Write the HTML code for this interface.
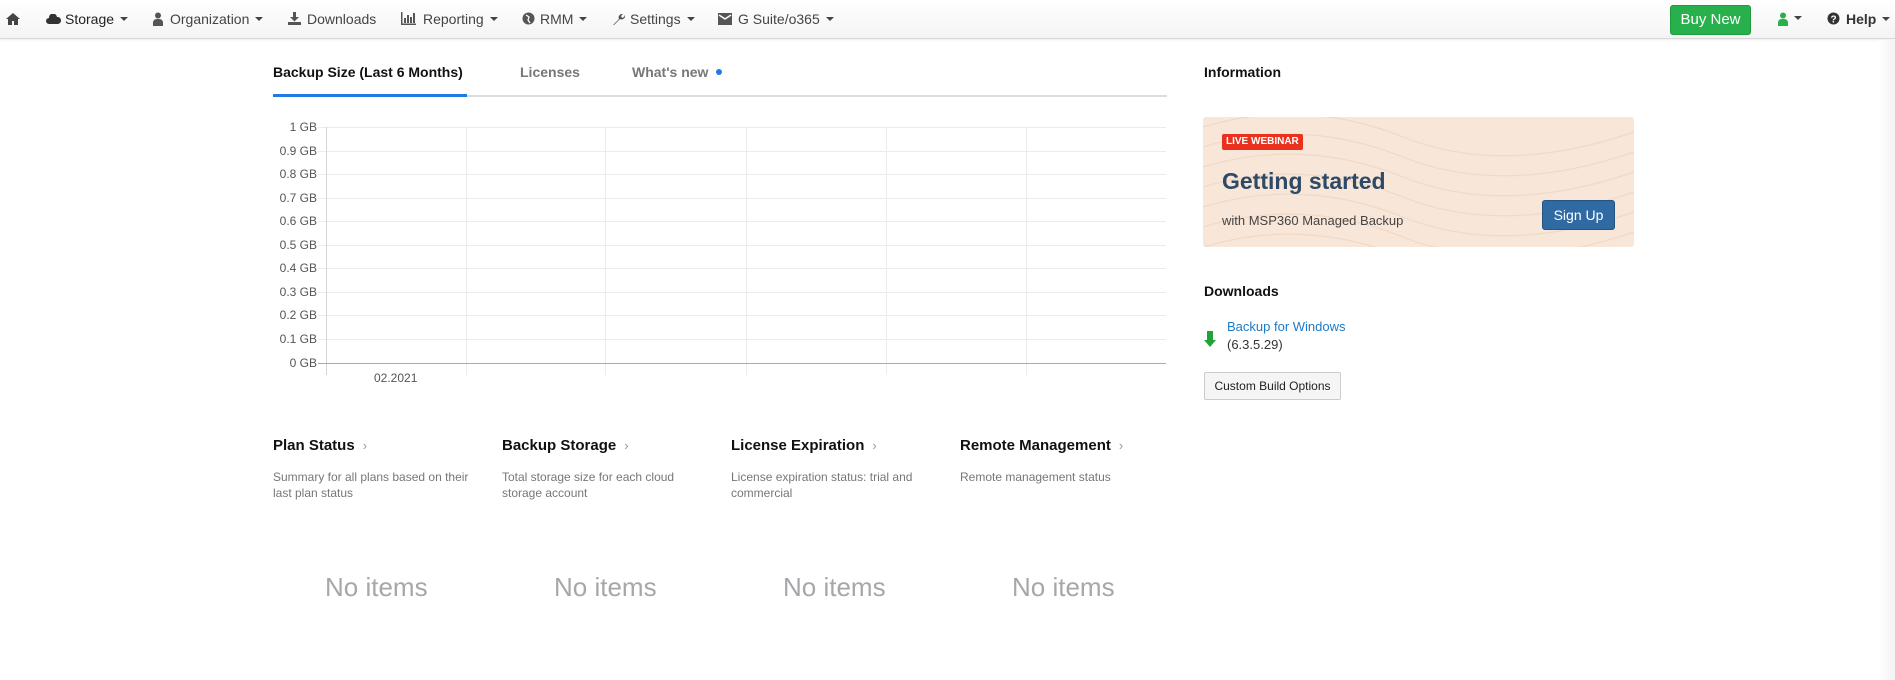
<!DOCTYPE html>
<html><head><meta charset="utf-8"><style>
*{margin:0;padding:0;box-sizing:border-box}
body{width:1895px;height:680px;background:#fff;font-family:"Liberation Sans",sans-serif;position:relative;overflow:hidden;color:#111}
.a{position:absolute;white-space:nowrap}
.nav{position:absolute;left:0;top:0;width:1895px;height:39px;background:linear-gradient(#fff,#f4f4f4);border-bottom:1px solid #d8d8d8;box-shadow:0 1px 3px rgba(0,0,0,.08)}
.ni{position:absolute;top:11px;font-size:14px;color:#444}
.car{display:inline-block;width:0;height:0;border-left:4px solid transparent;border-right:4px solid transparent;border-top:4px solid #444;vertical-align:middle;margin-left:6px;margin-top:-3px}
.tab{position:absolute;top:64px;font-size:14px;font-weight:bold}
.yl{position:absolute;right:1578px;font-size:12px;color:#555;text-align:right}
.h{position:absolute;top:437px;font-size:15px;font-weight:bold}
.h span{color:#999;font-weight:normal;margin-left:8px;font-size:13px}
.d{position:absolute;top:469px;font-size:12px;color:#777;line-height:16px;width:215px;white-space:normal}
.ne{position:absolute;top:572px;font-size:26px;color:#a5a7aa}
</style></head><body>
<div class="nav"></div>
<svg class="a" style="left:5px;top:12px" width="16" height="14" viewBox="0 0 16 14"><path d="M8 1L1 7h2v6h4V9h2v4h4V7h2z" fill="#444"/></svg>
<svg class="a" style="left:46px;top:14px" width="15" height="10" viewBox="0 0 15 10"><path d="M3 10a3 3 0 010-6 4 4 0 018-1 3.5 3.5 0 011 7z" fill="#333"/></svg>
<div class="ni" style="left:65px;color:#222">Storage<span class="car"></span></div>
<svg class="a" style="left:153px;top:12px" width="10" height="14" viewBox="0 0 10 14"><circle cx="5" cy="3.5" r="3" fill="#555"/><path d="M0 14v-4a4 4 0 014-3h2a4 4 0 014 3v4z" fill="#555"/></svg>
<div class="ni" style="left:170px">Organization<span class="car"></span></div>
<svg class="a" style="left:288px;top:12px" width="13" height="13" viewBox="0 0 13 13"><path d="M5 0h3v5h3l-4.5 4.5L2 5h3zM0 10h13v3H0z" fill="#555"/></svg>
<div class="ni" style="left:307px">Downloads</div>
<svg class="a" style="left:401px;top:12px" width="15" height="13" viewBox="0 0 15 13"><path d="M0 0h1.5v11.5H15V13H0zM3 6h2v5H3zM6 3h2v8H6zM9 5h2v6H9zM12 1h2v10h-2z" fill="#555"/></svg>
<div class="ni" style="left:423px">Reporting<span class="car"></span></div>
<svg class="a" style="left:522px;top:12px" width="13" height="13" viewBox="0 0 13 13"><circle cx="6.5" cy="6.5" r="6" fill="#555"/><path d="M4 3l3 2-1 3 2 3" stroke="#fff" stroke-width="1.3" fill="none"/></svg>
<div class="ni" style="left:540px">RMM<span class="car"></span></div>
<svg class="a" style="left:612px;top:12px" width="14" height="14" viewBox="0 0 14 14"><path d="M1 13l6-6a3.5 3.5 0 014-5l-2 2 1 2 2-1 1-2a3.5 3.5 0 01-5 4l-6 6z" fill="#555"/></svg>
<div class="ni" style="left:630px">Settings<span class="car"></span></div>
<svg class="a" style="left:718px;top:13px" width="14" height="12" viewBox="0 0 14 12"><path d="M0 0h14v12H0z" fill="#555"/><path d="M1 2l6 4 6-4" stroke="#fff" stroke-width="1.5" fill="none"/></svg>
<div class="ni" style="left:738px">G Suite/o365<span class="car"></span></div>
<div class="a" style="left:1670px;top:5px;width:81px;height:30px;background:#27b04b;border:1px solid #1f9a3e;border-radius:3px;color:#fff;font-size:15px;text-align:center;line-height:28px">Buy New</div>
<svg class="a" style="left:1778px;top:12px" width="10" height="14" viewBox="0 0 10 14"><circle cx="5" cy="3.5" r="3" fill="#27b04b"/><path d="M0 14v-4a4 4 0 014-3h2a4 4 0 014 3v4z" fill="#27b04b"/></svg>
<span class="car a" style="left:1788px;top:19px"></span>
<svg class="a" style="left:1827px;top:12px" width="13" height="13" viewBox="0 0 13 13"><circle cx="6.5" cy="6.5" r="6" fill="#333"/><text x="6.5" y="10.5" font-size="10" font-weight="bold" fill="#fff" text-anchor="middle" font-family="Liberation Sans">?</text></svg>
<div class="ni" style="left:1846px;font-weight:bold;color:#333">Help<span class="car"></span></div>
<div class="a" style="left:1878px;top:40px;width:17px;height:640px;background:linear-gradient(90deg,#fff,#f3f3f3)"></div>

<div class="tab" style="left:273px">Backup Size (Last 6 Months)</div>
<div class="tab" style="left:520px;color:#777">Licenses</div>
<div class="tab" style="left:632px;color:#777">What's new <span style="display:inline-block;width:6px;height:6px;border-radius:50%;background:#1e7be6;vertical-align:middle;margin-left:4px;margin-top:-3px"></span></div>
<div class="a" style="left:273px;top:95px;width:894px;height:2px;background:#ddd"></div>
<div class="a" style="left:273px;top:94px;width:194px;height:3px;background:#1e7be6"></div>

<svg class="a" style="left:0;top:0" width="1200" height="400">
<g stroke="#ebebeb" stroke-width="1">
<line x1="318" x2="1166" y1="127.5" y2="127.5"/><line x1="318" x2="1166" y1="151.5" y2="151.5"/><line x1="318" x2="1166" y1="174.5" y2="174.5"/><line x1="318" x2="1166" y1="198.5" y2="198.5"/><line x1="318" x2="1166" y1="221.5" y2="221.5"/><line x1="318" x2="1166" y1="245.5" y2="245.5"/><line x1="318" x2="1166" y1="268.5" y2="268.5"/><line x1="318" x2="1166" y1="292.5" y2="292.5"/><line x1="318" x2="1166" y1="315.5" y2="315.5"/><line x1="318" x2="1166" y1="339.5" y2="339.5"/>
<line x1="466.5" x2="466.5" y1="127" y2="375"/><line x1="605.5" x2="605.5" y1="127" y2="375"/><line x1="746.5" x2="746.5" y1="127" y2="375"/><line x1="886.5" x2="886.5" y1="127" y2="375"/><line x1="1026.5" x2="1026.5" y1="127" y2="375"/>
</g>
<line x1="326.5" x2="326.5" y1="127" y2="375" stroke="#d5d5d5"/>
<line x1="318" x2="1166" y1="363.5" y2="363.5" stroke="#aaa"/>
</svg>
<div class="yl" style="top:120px">1 GB</div><div class="yl" style="top:144px">0.9 GB</div><div class="yl" style="top:167px">0.8 GB</div><div class="yl" style="top:191px">0.7 GB</div><div class="yl" style="top:214px">0.6 GB</div><div class="yl" style="top:238px">0.5 GB</div><div class="yl" style="top:261px">0.4 GB</div><div class="yl" style="top:285px">0.3 GB</div><div class="yl" style="top:308px">0.2 GB</div><div class="yl" style="top:332px">0.1 GB</div><div class="yl" style="top:356px">0 GB</div>
<div class="a" style="left:374px;top:371px;font-size:12px;color:#555">02.2021</div>

<div class="h" style="left:273px">Plan Status<span>›</span></div>
<div class="h" style="left:502px">Backup Storage<span>›</span></div>
<div class="h" style="left:731px">License Expiration<span>›</span></div>
<div class="h" style="left:960px">Remote Management<span>›</span></div>
<div class="d" style="left:273px">Summary for all plans based on their last plan status</div>
<div class="d" style="left:502px;width:200px">Total storage size for each cloud storage account</div>
<div class="d" style="left:731px;width:200px">License expiration status: trial and commercial</div>
<div class="d" style="left:960px">Remote management status</div>
<div class="ne" style="left:325px">No items</div>
<div class="ne" style="left:554px">No items</div>
<div class="ne" style="left:783px">No items</div>
<div class="ne" style="left:1012px">No items</div>

<div class="a" style="left:1204px;top:64px;font-size:14px;font-weight:bold">Information</div>
<div class="a" style="left:1203px;top:117px;width:431px;height:130px;background:#f8e6d8;border-radius:3px;overflow:hidden">
<svg width="431" height="130" style="position:absolute;left:0;top:0"><g stroke="#f0d9c6" fill="none" stroke-width="1.2">
<path d="M0 10q100-30 200 10t231-5"/><path d="M0 30q100-30 200 10t231-5"/><path d="M0 50q100-30 200 10t231-5"/><path d="M0 70q100-30 200 10t231-5"/><path d="M0 90q100-30 200 10t231-5"/><path d="M0 110q100-30 200 10t231-5"/><path d="M0 130q100-30 200 10t231-5"/></g></svg>
</div>
<div class="a" style="left:1222px;top:134px;height:16px;padding:0 4px;background:#e8321e;border-radius:2px;color:#fff;font-size:10px;font-weight:bold;line-height:16px">LIVE WEBINAR</div>
<div class="a" style="left:1222px;top:168px;font-size:23px;font-weight:bold;color:#2e4a66">Getting started</div>
<div class="a" style="left:1222px;top:213px;font-size:13px;color:#444">with MSP360 Managed Backup</div>
<div class="a" style="left:1542px;top:200px;width:73px;height:30px;background:#2f6aa3;border:1px solid #245482;border-radius:3px;color:#fff;font-size:14px;text-align:center;line-height:28px">Sign Up</div>

<div class="a" style="left:1204px;top:283px;font-size:14px;font-weight:bold">Downloads</div>
<svg class="a" style="left:1204px;top:331px" width="12" height="16" viewBox="0 0 12 16"><path d="M3 0h6v9h3l-6 7-6-7h3z" fill="#21a33a"/></svg>
<div class="a" style="left:1227px;top:319px;font-size:13px;color:#1e7bc6">Backup for Windows</div>
<div class="a" style="left:1227px;top:337px;font-size:13px;color:#333">(6.3.5.29)</div>
<div class="a" style="left:1204px;top:372px;width:137px;height:28px;background:#f5f5f5;border:1px solid #ccc;border-radius:2px;font-size:12px;text-align:center;line-height:26px;color:#222">Custom Build Options</div>
</body></html>
